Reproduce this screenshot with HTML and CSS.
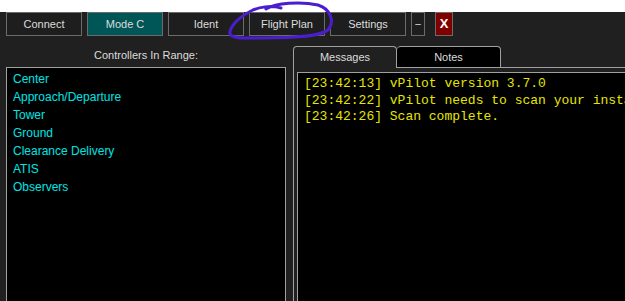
FILE: index.html
```html
<!DOCTYPE html>
<html lang="en">
<head>
    <meta charset="UTF-8">
    <meta name="viewport" content="width=device-width, initial-scale=1.0">
    <title>vPilot</title>
    <link rel="stylesheet" href="styles.css">
</head>
<body>
    <div class="top-band"></div>

    <div class="window">
        <div class="toolbar">
            <button class="tool-btn">Connect</button>
            <button class="tool-btn active">Mode C</button>
            <button class="tool-btn">Ident</button>
            <button class="tool-btn">Flight Plan</button>
            <button class="tool-btn">Settings</button>
            <button class="tool-btn small">&ndash;</button>
            <button class="tool-btn close">X</button>
        </div>

        <div class="main">
            <section class="left-col">
                <div class="caption">Controllers In Range:</div>
                <ul class="controllers">
                    <li>Center</li>
                    <li>Approach/Departure</li>
                    <li>Tower</li>
                    <li>Ground</li>
                    <li>Clearance Delivery</li>
                    <li>ATIS</li>
                    <li>Observers</li>
                </ul>
            </section>

            <section class="right-col">
                <div class="tabs">
                    <div class="tab selected">Messages</div>
                    <div class="tab">Notes</div>
                    <div class="tab-rest"></div>
                </div>
                <div class="tab-panel">
                    <div class="messages">
                        <div class="msg">[23:42:13] vPilot version 3.7.0</div>
                        <div class="msg">[23:42:22] vPilot needs to scan your installed models</div>
                        <div class="msg">[23:42:26] Scan complete.</div>
                    </div>
                </div>
            </section>
        </div>
    </div>

    <!-- hand drawn mark around the Flight Plan button -->
    <svg class="annotation" width="625" height="60" viewBox="0 0 625 60">
        <path d="M 266 9 C 276 3, 300 1, 318 5 C 331 9, 335 22, 328 30 C 319 37, 292 38, 262 38 C 246 38, 232 39, 230 34 C 229 27, 239 17, 251 11 C 259 7, 271 5, 281 8"
              fill="none" stroke="#4a1ecf" stroke-width="3" stroke-linecap="round"/>
    </svg>
</body>
</html>
```

FILE: styles.css
```css
body {
    margin: 0;
    width: 625px;
    height: 301px;
    overflow: hidden;
    background-color: #202020;
    font-family: "Liberation Sans", Arial, sans-serif;
    color: #dcdcdc;
    position: relative;
}

.top-band {
    height: 12px;
    background: #fff;
}

.window {
    background-color: #202020;
}

.toolbar {
    display: flex;
    gap: 5px;
    padding-left: 6px;
    height: 24px;
}

.tool-btn {
    box-sizing: border-box;
    width: 76px;
    height: 24px;
    padding: 0;
    background-color: #1e1e1e;
    border: 1px solid #6b6b6b;
    color: #dcdcdc;
    font-family: "Liberation Sans", Arial, sans-serif;
    font-size: 11px;
    line-height: 20px;
}

.tool-btn.active {
    background-color: #005656;
}

.tool-btn.small {
    width: 14px;
    font-size: 10px;
}

.tool-btn.close {
    width: 18px;
    margin-left: 5px;
    background-color: #800000;
    color: #fff;
    font-weight: bold;
    font-size: 13px;
}

.main {
    display: grid;
    grid-template-columns: 280px 420px;
    column-gap: 7px;
    padding-left: 6px;
}

.caption {
    height: 31px;
    box-sizing: border-box;
    padding-top: 13px;
    text-align: center;
    font-size: 11px;
    line-height: 13px;
}

.controllers {
    list-style: none;
    margin: 0;
    height: 260px;
    padding: 2px 6px;
    border: 1px solid #a0a0a0;
    background: #000;
    color: #00e4e4;
    font-size: 12px;
    line-height: 18px;
}

.tabs {
    display: flex;
    margin-top: 10px;
    height: 22px;
}

.tab {
    box-sizing: border-box;
    width: 104px;
    height: 22px;
    border: 1px solid #a0a0a0;
    border-radius: 4px 4px 0 0;
    background: #000;
    font-size: 11px;
    line-height: 20px;
    text-align: center;
    color: #dcdcdc;
}

.tab.selected {
    background: #202020;
    border-bottom: none;
}

.tab + .tab {
    border-left: none;
}

.tab-rest {
    flex: 1;
    border-bottom: 1px solid #a0a0a0;
}

.tab-panel {
    border-left: 1px solid #a0a0a0;
    padding: 4px 0 0 3px;
    height: 240px;
}

.messages {
    height: 230px;
    border: 1px solid #a0a0a0;
    background: #000;
    padding: 3px 6px;
    color: #e6e600;
    font-family: "Liberation Mono", "Courier New", monospace;
    font-size: 13px;
    line-height: 16.5px;
    overflow: hidden;
}

.msg {
    white-space: pre;
}

.annotation {
    position: absolute;
    top: 0;
    left: 0;
    pointer-events: none;
}
```
